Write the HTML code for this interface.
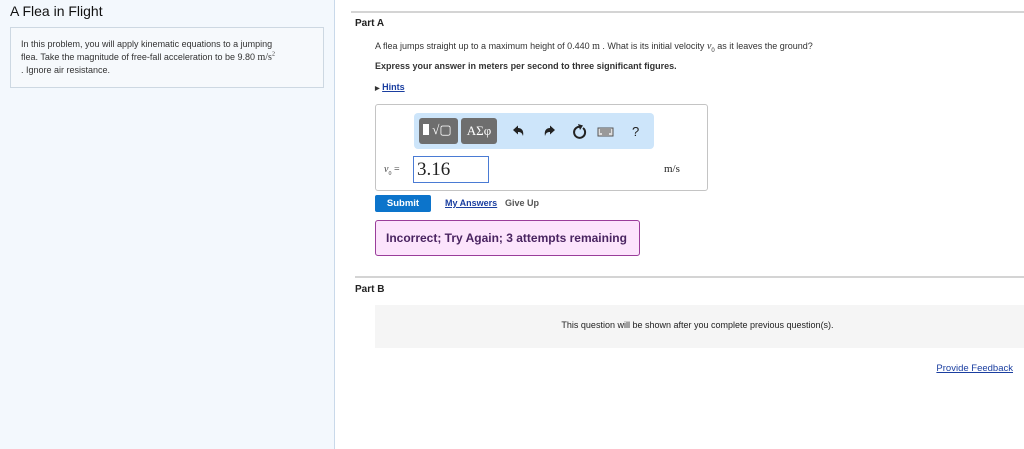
<!DOCTYPE html>
<html><head><meta charset="utf-8"><style>
*{margin:0;padding:0;box-sizing:border-box}
body{width:1024px;height:449px;position:relative;background:#fff;font-family:"Liberation Sans",Arial,sans-serif;color:#222;overflow:hidden}
.a{position:absolute;white-space:nowrap}
.serif{font-family:"Liberation Serif",serif}
sup,sub{line-height:0}
</style></head><body>
<div class="a" style="left:0;top:0;width:335px;height:449px;background:#f3f8fd;border-right:1px solid #c9d9ea"></div>
<div class="a" style="left:10px;top:3px;font-size:14px;color:#111">A Flea in Flight</div>
<div class="a" style="left:10px;top:27px;width:314px;height:61px;border:1px solid #cdd8e2;background:#f6f9fc"></div>
<div class="a" style="left:21px;top:38px;font-size:9px;line-height:13px;color:#333">In this problem, you will apply kinematic equations to a jumping<br>flea. Take the magnitude of free-fall acceleration to be 9.80 <span class="serif" style="font-size:10px">m/s<sup style="font-size:6px">2</sup></span><br>. Ignore air resistance.</div>

<div class="a" style="left:351px;top:11px;width:673px;height:2px;background:#d4d4d4"></div>
<div class="a" style="left:355px;top:18px;font-size:10px;font-weight:bold">Part A</div>
<div class="a" style="left:375px;top:41px;font-size:9px;color:#333">A flea jumps straight up to a maximum height of 0.440 <span class="serif" style="font-size:10px">m</span> . What is its initial velocity <i class="serif" style="font-size:10px">v</i><sub style="font-size:6px">0</sub> as it leaves the ground?</div>
<div class="a" style="left:375px;top:61px;font-size:9px;font-weight:bold;color:#333">Express your answer in meters per second to three significant figures.</div>
<div class="a" style="left:375px;top:82px;font-size:9px;font-weight:bold;color:#1a3ea0"><span style="font-size:6px;color:#333">▶</span> <u>Hints</u></div>

<div class="a" style="left:375px;top:104px;width:333px;height:87px;border:1px solid #c4c4c4;border-radius:3px"></div>
<div class="a" style="left:414px;top:113px;width:240px;height:36px;background:#cde5fa;border-radius:4px"></div>
<div class="a" style="left:419px;top:118px;width:39px;height:26px;background:#6e6e6e;border-radius:3px;color:#fff;font-size:13px;padding:4px 0 0 4px" ><span style="display:inline-block;width:6px;height:11px;background:#fff;vertical-align:-1px"></span><span class="serif"> √▢</span></div>
<div class="a serif" style="left:461px;top:118px;width:36px;height:26px;background:#6e6e6e;border-radius:3px;color:#fff;font-size:13px;text-align:center;line-height:26px">ΑΣφ</div>
<svg class="a" style="left:510px;top:123px" width="140" height="16" viewBox="0 0 140 16">
<path d="M3 7 L8 2.5 L8 5 C12 5 14 8 13 13 C12 10 11 9 8 9 L8 11.5 Z" fill="#222"/>
<path d="M45 7 L40 2.5 L40 5 C36 5 34 8 35 13 C36 10 37 9 40 9 L40 11.5 Z" fill="#222"/>
<path d="M71 4 A5.5 5.5 0 1 0 73 5" fill="none" stroke="#222" stroke-width="2"/><path d="M68 1 L73 2.5 L70 7 Z" fill="#222"/>
<rect x="88" y="5" width="15" height="8" fill="#ddd" stroke="#555" stroke-width="1"/><path d="M90 7h11M90 9h11M92 11h7" stroke="#555" stroke-width="1"/>
<text x="122" y="13" font-size="13" font-family="Liberation Sans" fill="#222">?</text>
</svg>
<div class="a serif" style="left:384px;top:164px;font-size:10px;color:#444"><i>v</i><sub style="font-size:6px">0</sub> =</div>
<div class="a serif" style="left:413px;top:156px;width:76px;height:27px;border:1px solid #4a7bd4;font-size:19px;padding-left:3px;line-height:25px">3.16</div>
<div class="a serif" style="left:664px;top:163px;font-size:11px">m/s</div>

<div class="a" style="left:375px;top:195px;width:56px;height:17px;background:#0c74cb;border-radius:2px;color:#fff;font-size:9.5px;font-weight:bold;text-align:center;line-height:17px">Submit</div>
<div class="a" style="left:445px;top:198px;font-size:9px;font-weight:bold;color:#1a3ea0;text-decoration:underline">My Answers</div>
<div class="a" style="left:505px;top:198px;font-size:9px;font-weight:bold;color:#555">Give Up</div>
<div class="a" style="left:375px;top:220px;width:265px;height:36px;background:#fce4fc;border:1px solid #9a3d9a;border-radius:3px;font-size:12px;font-weight:bold;color:#4a2461;line-height:34px;padding-left:10px">Incorrect; Try Again; 3 attempts remaining</div>

<div class="a" style="left:355px;top:276px;width:669px;height:2px;background:#d4d4d4"></div>
<div class="a" style="left:355px;top:284px;font-size:10px;font-weight:bold">Part B</div>
<div class="a" style="left:375px;top:305px;width:649px;height:43px;background:#f5f5f5"></div>
<div class="a" style="left:375px;top:320px;width:649px;text-align:center;font-size:9px;color:#222;padding-right:4px">This question will be shown after you complete previous question(s).</div>
<div class="a" style="right:11px;top:363px;font-size:9.5px;color:#1a3ea0;text-decoration:underline">Provide Feedback</div>
</body></html>
